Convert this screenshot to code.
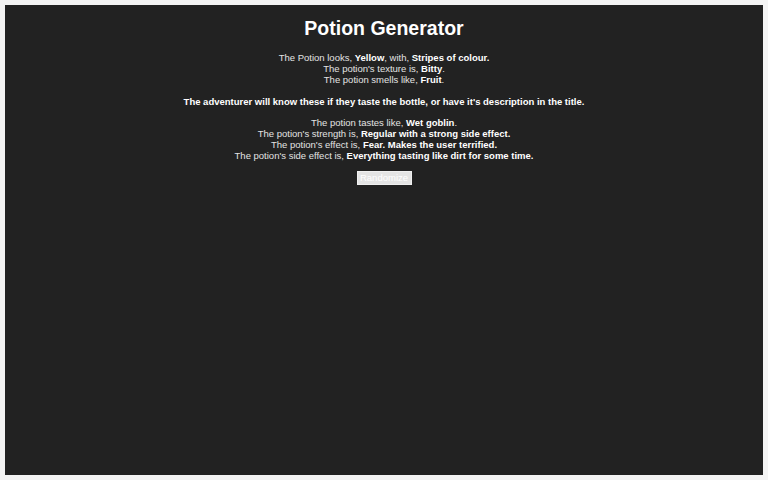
export default function App() {
  return (
    <div className="min-h-screen bg-[#f4f4f4] p-[5px] font-['Liberation_Sans',Arial,sans-serif]">
      <div className="h-[470px] bg-[#222222] text-center text-white">
        <h1 className="pt-[11px] text-[19.5px] font-bold leading-[24px]">Potion Generator</h1>
        <div className="mt-[12px] text-[9.5px] leading-[11px] text-[#e2e2e2]">
          <p>
            The Potion looks, <b className="text-white">Yellow</b>, with, <b className="text-white">Stripes of colour.</b>
            <br />
            The potion's texture is, <b className="text-white">Bitty</b>.
            <br />
            The potion smells like, <b className="text-white">Fruit</b>.
          </p>
          <p className="mt-[11px] font-bold text-white">
            The adventurer will know these if they taste the bottle, or have it's description in the title.
          </p>
          <p className="mt-[10px]">
            The potion tastes like, <b className="text-white">Wet goblin</b>.
            <br />
            The potion's strength is, <b className="text-white">Regular with a strong side effect.</b>
            <br />
            The potion's effect is, <b className="text-white">Fear. Makes the user terrified.</b>
            <br />
            The potion's side effect is, <b className="text-white">Everything tasting like dirt for some time.</b>
          </p>
          <button className="mt-[10px] h-[14px] w-[55px] border border-[#f0f0f0] bg-[#e4e4e4] text-[9.5px] leading-[12px] text-white">
            Randomize
          </button>
        </div>
      </div>
    </div>
  );
}
